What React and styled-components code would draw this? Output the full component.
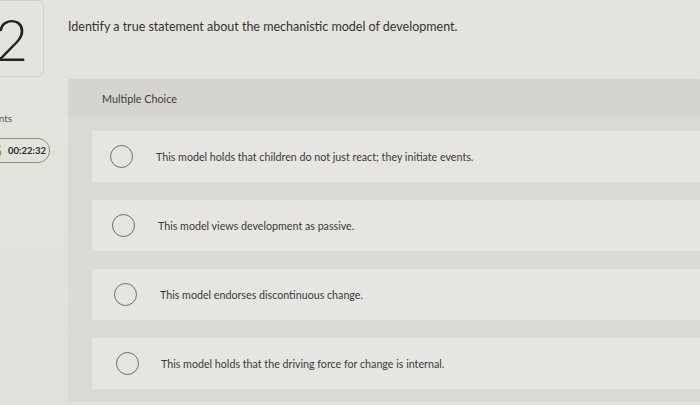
import React from "react";
import styled, { createGlobalStyle } from "styled-components";

const Global = createGlobalStyle`
  html, body { margin: 0; padding: 0; background: #e3e2dd; }
  body { font-family: "Lato", "Open Sans", sans-serif; color: #3a3a3a; overflow: hidden; }
  #root { width: 700px; height: 405px; overflow: hidden; }
`;

const Page = styled.div`
  display: flex;
  width: 700px;
  height: 405px;
  background: linear-gradient(180deg, #e4e3de 0%, #e1e0db 100%);
`;

const LeftCol = styled.div`
  flex: 0 0 118px;
  margin-left: -50px;
  display: flex;
  flex-direction: column;
`;

const NumberBox = styled.div`
  box-sizing: border-box;
  width: 94px;
  height: 77px;
  border: 1px solid #d2d0cb;
  border-radius: 6px;
  display: flex;
  align-items: center;
  justify-content: flex-end;
  padding-right: 15px;
  padding-top: 2px;
  font-family: "Lato", sans-serif;
  font-weight: 300;
  font-size: 57px;
  line-height: 1;
  color: #222;
`;

const Points = styled.div`
  margin-top: 34px;
  padding-left: 35px;
  font-size: 10px;
  line-height: 14px;
  color: #555;
`;

const Timer = styled.div`
  box-sizing: border-box;
  margin-top: 13px;
  margin-left: 30px;
  width: 70px;
  height: 25px;
  border: 1px solid #8e906e;
  border-radius: 12px;
  display: flex;
  align-items: center;
  justify-content: flex-end;
  gap: 5px;
  padding-right: 3px;
  font-size: 9.5px;
  font-weight: 700;
  color: #2a2a2a;
`;

const Main = styled.div`
  flex: 1;
  display: flex;
  flex-direction: column;
  min-width: 0;
`;

const Question = styled.div`
  padding-top: 19px;
  height: 79px;
  box-sizing: border-box;
  font-size: 12.5px;
  line-height: 16px;
  color: #333;
`;

const Panel = styled.div`
  flex: 1;
  display: flex;
  flex-direction: column;
  background: #dad9d4;
  margin-bottom: 3px;
`;

const PanelHeader = styled.div`
  height: 39px;
  display: flex;
  align-items: center;
  padding-left: 34px;
  background: #d5d4cf;
  font-size: 10.8px;
  color: #3d3d3d;
`;

const Options = styled.div`
  display: flex;
  flex-direction: column;
  gap: 18px;
  padding: 13px 0 13px 24px;
`;

const Option = styled.div`
  height: 51px;
  display: flex;
  align-items: center;
  padding-left: ${(p) => p.$indent}px;
  background: #e6e5e1;
`;

const Radio = styled.span`
  box-sizing: border-box;
  width: 23px;
  height: 23px;
  border-radius: 50%;
  border: 1.5px solid #6c6c6c;
  flex-shrink: 0;
`;

const OptionText = styled.span`
  margin-left: ${(p) => p.$gap}px;
  font-size: 10.7px;
  color: #3a3a3a;
`;

const ClockIcon = () => (
  <svg width="10" height="12" viewBox="0 0 10 12">
    <path d="M2 1.5 Q5 0 8 1.5" stroke="#9a9a8a" strokeWidth="1.2" fill="none" />
    <circle cx="5" cy="8" r="3.3" fill="#6da544" />
    <circle cx="5" cy="8" r="1.3" fill="#e3e2dd" />
  </svg>
);

const options = [
  { text: "This model holds that children do not just react; they initiate events.", indent: 18, gap: 23 },
  { text: "This model views development as passive.", indent: 20, gap: 23 },
  { text: "This model endorses discontinuous change.", indent: 22, gap: 23 },
  { text: "This model holds that the driving force for change is internal.", indent: 24, gap: 22 },
];

export default function App() {
  return (
    <>
      <Global />
      <Page>
        <LeftCol>
          <NumberBox>2</NumberBox>
          <Points>points</Points>
          <Timer>
            <ClockIcon />
            <span>00:22:32</span>
          </Timer>
        </LeftCol>
        <Main>
          <Question>Identify a true statement about the mechanistic model of development.</Question>
          <Panel>
            <PanelHeader>Multiple Choice</PanelHeader>
            <Options>
              {options.map((o) => (
                <Option key={o.text} $indent={o.indent}>
                  <Radio />
                  <OptionText $gap={o.gap}>{o.text}</OptionText>
                </Option>
              ))}
            </Options>
          </Panel>
        </Main>
      </Page>
    </>
  );
}
